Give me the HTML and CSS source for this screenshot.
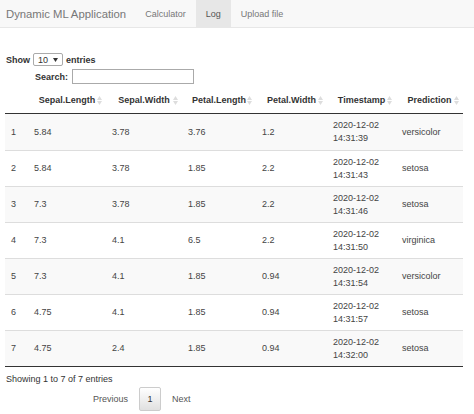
FILE: index.html
```html
<!DOCTYPE html>
<html>
<head>
<meta charset="utf-8">
<link rel="stylesheet" href="styles.css">
</head>
<body>
<nav class="navbar">
  <span class="brand">Dynamic ML Application</span>
  <a class="nav-item">Calculator</a>
  <a class="nav-item active">Log</a>
  <a class="nav-item">Upload file</a>
</nav>
<main class="content">
  <div class="length-row">
    <span class="lbl">Show</span>
    <span class="select"><span>10</span><svg class="caret" width="5" height="4" viewBox="0 0 5 4"><path d="M0 0H5L2.5 4Z" fill="#333"/></svg></span>
    <span class="lbl">entries</span>
  </div>
  <div class="search-row">
    <span class="lbl">Search:</span>
    <span class="input"></span>
  </div>
  <table class="dt">
    <colgroup>
      <col class="c0"><col class="c1"><col class="c2"><col class="c3"><col class="c4"><col class="c5"><col class="c6">
    </colgroup>
    <thead>
      <tr>
        <th></th>
        <th>Sepal.Length<svg class="sort" width="5" height="9" viewBox="0 0 5 9"><path d="M0 4H5L2.5 0Z M0 5H5L2.5 9Z" fill="#ddd"/></svg></th>
        <th>Sepal.Width<svg class="sort" width="5" height="9" viewBox="0 0 5 9"><path d="M0 4H5L2.5 0Z M0 5H5L2.5 9Z" fill="#ddd"/></svg></th>
        <th>Petal.Length<svg class="sort" width="5" height="9" viewBox="0 0 5 9"><path d="M0 4H5L2.5 0Z M0 5H5L2.5 9Z" fill="#ddd"/></svg></th>
        <th>Petal.Width<svg class="sort" width="5" height="9" viewBox="0 0 5 9"><path d="M0 4H5L2.5 0Z M0 5H5L2.5 9Z" fill="#ddd"/></svg></th>
        <th>Timestamp<svg class="sort" width="5" height="9" viewBox="0 0 5 9"><path d="M0 4H5L2.5 0Z M0 5H5L2.5 9Z" fill="#ddd"/></svg></th>
        <th>Prediction<svg class="sort" width="5" height="9" viewBox="0 0 5 9"><path d="M0 4H5L2.5 0Z M0 5H5L2.5 9Z" fill="#ddd"/></svg></th>
      </tr>
    </thead>
    <tbody>
      <tr class="odd"><td>1</td><td>5.84</td><td>3.78</td><td>3.76</td><td>1.2</td><td>2020-12-02<br>14:31:39</td><td>versicolor</td></tr>
      <tr><td>2</td><td>5.84</td><td>3.78</td><td>1.85</td><td>2.2</td><td>2020-12-02<br>14:31:43</td><td>setosa</td></tr>
      <tr class="odd"><td>3</td><td>7.3</td><td>3.78</td><td>1.85</td><td>2.2</td><td>2020-12-02<br>14:31:46</td><td>setosa</td></tr>
      <tr><td>4</td><td>7.3</td><td>4.1</td><td>6.5</td><td>2.2</td><td>2020-12-02<br>14:31:50</td><td>virginica</td></tr>
      <tr class="odd"><td>5</td><td>7.3</td><td>4.1</td><td>1.85</td><td>0.94</td><td>2020-12-02<br>14:31:54</td><td>versicolor</td></tr>
      <tr><td>6</td><td>4.75</td><td>4.1</td><td>1.85</td><td>0.94</td><td>2020-12-02<br>14:31:57</td><td>setosa</td></tr>
      <tr class="odd"><td>7</td><td>4.75</td><td>2.4</td><td>1.85</td><td>0.94</td><td>2020-12-02<br>14:32:00</td><td>setosa</td></tr>
    </tbody>
  </table>
  <div class="info">Showing 1 to 7 of 7 entries</div>
  <div class="pager">
    <a class="page-link">Previous</a>
    <a class="page-btn">1</a>
    <a class="page-link">Next</a>
  </div>
</main>
</body>
</html>
```
FILE: styles.css
```css
html, body {
  margin: 0;
  padding: 0;
  background: #fff;
  font-family: "Liberation Sans", Arial, sans-serif;
  font-size: 9px;
  color: #444;
}

.navbar {
  display: flex;
  align-items: stretch;
  height: 27px;
  background: #f8f8f8;
  border-bottom: 1px solid #e7e7e7;
}

.brand {
  display: flex;
  align-items: center;
  padding-left: 6px;
  margin-right: 9px;
  font-size: 11.3px;
  color: #777;
}

.nav-item {
  display: flex;
  align-items: center;
  padding: 0 10px;
  color: #777;
}

.nav-item.active {
  background: #e7e7e7;
  color: #555;
}

.content {
  padding: 0 5px;
}

.length-row {
  display: flex;
  align-items: center;
  gap: 3px;
  margin-top: 25px;
  padding-left: 1px;
  height: 13px;
}

.lbl {
  font-weight: bold;
  color: #333;
}

.select {
  display: flex;
  align-items: center;
  justify-content: space-between;
  box-sizing: border-box;
  width: 30px;
  height: 13px;
  padding: 0 4px;
  border: 1px solid #aaa;
  border-radius: 2px;
  background: #fff;
  color: #333;
}

.search-row {
  display: flex;
  align-items: center;
  gap: 4px;
  margin-top: 3px;
  padding-left: 30px;
  height: 15px;
}

.input {
  box-sizing: border-box;
  width: 122px;
  height: 15px;
  border: 1px solid #aaa;
  background: #fff;
}

.dt {
  margin-top: 5px;
  width: 458px;
  table-layout: fixed;
  border-collapse: separate;
  border-spacing: 0;
  border-bottom: 1px solid #333;
}

.c0 { width: 23px; }
.c1 { width: 78px; }
.c2 { width: 76px; }
.c3 { width: 74px; }
.c4 { width: 71px; }
.c5 { width: 69px; }
.c6 { width: 67px; }

.dt th {
  position: relative;
  padding: 5px 6px 6px;
  line-height: 13px;
  font-weight: bold;
  color: #333;
  text-align: center;
  border-bottom: 1px solid #333;
  white-space: nowrap;
}

.sort {
  position: absolute;
  right: 4px;
  top: 7px;
}

.dt td {
  box-sizing: border-box;
  height: 36px;
  padding: 0 6px;
  line-height: 13px;
  vertical-align: middle;
  text-align: left;
}

.dt tr + tr td {
  border-top: 1px solid #ddd;
}

.dt tr.odd td {
  background: #f9f9f9;
}

.info {
  margin-top: 6px;
  padding-left: 1px;
  line-height: 13px;
  color: #333;
}

.pager {
  display: flex;
  align-items: center;
  margin-top: 1px;
  padding-left: 82px;
  height: 24px;
}

.page-link {
  padding: 0 6px;
  color: #555;
}

.page-btn {
  box-sizing: border-box;
  display: flex;
  align-items: center;
  justify-content: center;
  width: 22px;
  height: 24px;
  margin: 0 5px;
  border: 1px solid #ccc;
  border-radius: 2px;
  background: linear-gradient(#fff, #e0e0e0);
  color: #333;
}
```
